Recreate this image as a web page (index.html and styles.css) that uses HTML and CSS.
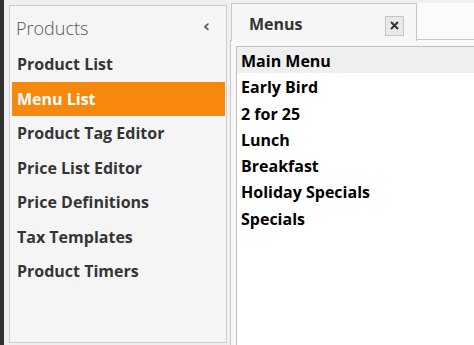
FILE: index.html
```html
<!DOCTYPE html>
<html>
<head>
<meta charset="utf-8">
<link rel="stylesheet" href="styles.css">
</head>
<body>
<div class="shell">
  <div class="edge"></div>
  <div class="gutter">
    <aside class="sidebar">
      <div class="side-head">
        <span class="side-title">Products</span>
        <span class="chev">&#8249;</span>
      </div>
      <nav class="nav">
        <div class="nav-item">Product List</div>
        <div class="nav-item active">Menu List</div>
        <div class="nav-item">Product Tag Editor</div>
        <div class="nav-item">Price List Editor</div>
        <div class="nav-item">Price Definitions</div>
        <div class="nav-item">Tax Templates</div>
        <div class="nav-item">Product Timers</div>
      </nav>
    </aside>
  </div>
  <main class="main">
    <div class="tabstrip">
      <div class="tab">
        <span class="tab-label">Menus</span>
        <span class="close">
          <svg width="9" height="9" viewBox="0 0 9 9"><path d="M1 1 L8 8 M8 1 L1 8" stroke="#333" stroke-width="2" fill="none"/></svg>
        </span>
      </div>
      <div class="strip-rest"></div>
    </div>
    <div class="tabpanel">
      <div class="listbox">
        <div class="row selected">Main Menu</div>
        <div class="row">Early Bird</div>
        <div class="row">2 for 25</div>
        <div class="row">Lunch</div>
        <div class="row">Breakfast</div>
        <div class="row">Holiday Specials</div>
        <div class="row">Specials</div>
      </div>
    </div>
  </main>
</div>
</body>
</html>
```

FILE: styles.css
```css
html, body {
  margin: 0;
  padding: 0;
}
body {
  width: 474px;
  height: 345px;
  overflow: hidden;
  background: #f0f0f0;
  font-family: "Open Sans", "Noto Sans", sans-serif;
}
.shell {
  display: flex;
  height: 345px;
}
.edge {
  width: 4px;
  background: #2f2f2f;
  flex: none;
}
.gutter {
  width: 223px;
  flex: none;
  padding: 5px 0 2px 5px;
  box-sizing: border-box;
  background: #efefef;
}
.sidebar {
  height: 100%;
  box-sizing: border-box;
  border: 1px solid #cfcfcf;
  background: #f5f5f5;
}
.side-head {
  height: 41px;
  display: flex;
  align-items: center;
  justify-content: space-between;
  padding: 2px 16px 0 6px;
  box-sizing: border-box;
}
.side-title {
  font-family: "Open Sans", sans-serif;
  font-weight: 300;
  font-size: 18px;
  color: #555;
}
.chev {
  font-family: "DejaVu Sans", sans-serif;
  font-weight: bold;
  font-size: 17px;
  color: #555;
  margin-top: -4px;
}
.nav {
  display: flex;
  flex-direction: column;
}
.nav-item {
  height: 34.5px;
  box-sizing: border-box;
  padding: 1px 0 0 5px;
  line-height: 33.5px;
  margin: 0 1px 0 2px;
  font-weight: 700;
  font-size: 16px;
  color: #353535;
}
.nav-item.active {
  background: #f7880e;
  color: #fff;
}
.main {
  flex: 1;
  display: flex;
  flex-direction: column;
  padding: 3px 0 0 3px;
  background: #f0f0f0;
}
.tabstrip {
  display: flex;
  height: 37px;
  flex: none;
}
.tab {
  width: 186px;
  margin-left: 1px;
  box-sizing: border-box;
  border: 1px solid #c8c8c8;
  border-bottom: none;
  background: #f6f6f6;
  display: flex;
  align-items: center;
  padding: 0 12px 0 17px;
  position: relative;
  z-index: 1;
  height: 38px;
}
.tab-label {
  flex: 1;
  font-weight: 700;
  font-size: 16px;
  color: #333;
  margin-top: 3px;
}
.close {
  width: 17px;
  height: 18px;
  border: 1px solid #c6c6c6;
  background: #e9e9e9;
  display: flex;
  align-items: center;
  justify-content: center;
  margin-top: 6px;
}
.strip-rest {
  flex: 1;
  border-bottom: 1px solid #c8c8c8;
  background: #fbfbfb;
}
.tabpanel {
  flex: 1;
  border-left: 1px solid #c8c8c8;
  background: #f8f8f8;
  padding: 6px 0 0 5px;
}
.listbox {
  height: 100%;
  box-sizing: border-box;
  border-top: 1px solid #c0c0c0;
  border-left: 1px solid #c0c0c0;
  background: #fff;
}
.row {
  height: 26.3px;
  box-sizing: border-box;
  padding: 3px 0 0 4px;
  line-height: 23.3px;
  font-weight: 700;
  font-size: 16px;
  color: #000;
}
.row.selected {
  background: #efefef;
}
```
